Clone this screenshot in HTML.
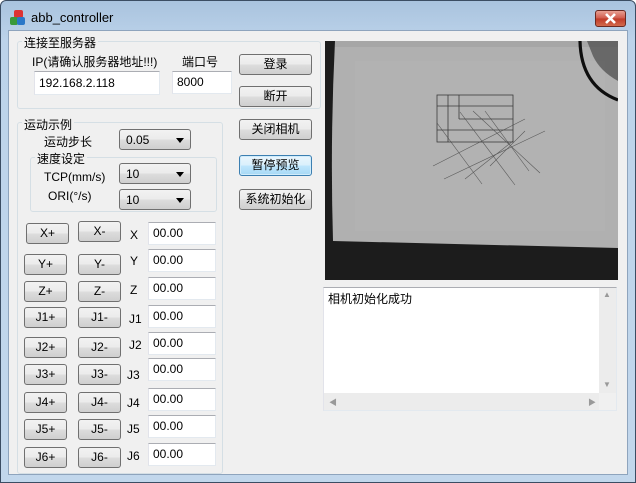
<!DOCTYPE html>
<html><head><meta charset="utf-8"><style>
*{box-sizing:border-box;margin:0;padding:0}
body{width:636px;height:483px;overflow:hidden;background:#fff;font-family:"Liberation Sans","Noto Sans CJK SC",sans-serif;font-size:12px;color:#000;position:relative}
.frame{position:absolute;left:0;top:0;width:636px;height:483px;background:linear-gradient(#a9c3de,#bcd3ea 40px,#c2d7ec);border:1px solid #3b4d63;border-radius:6px 6px 0 0}
.client{position:absolute;left:8px;top:30px;width:620px;height:445px;background:#f0f0f0;border:1px solid #8ea4bd}
.a{position:absolute}
.t{position:absolute;white-space:nowrap;font-size:12px}
.gb{position:absolute;border:1px solid #d5dfe5;border-radius:3px}
.gl{position:absolute;background:#f0f0f0;padding:0 2px;white-space:nowrap}
.btn{position:absolute;border:1px solid #707070;border-radius:3px;background:linear-gradient(#f2f2f2 0,#ebebeb 50%,#dddddd 51%,#cfcfcf 100%);text-align:center;font-size:12px;line-height:19px}
.btn.hi{border-color:#3c7fb1;background:linear-gradient(#eaf6fd,#d9f0fc 50%,#bee6fd 51%,#a7d9f5);box-shadow:inset 0 0 0 1px #d0ecfb}
.tb{position:absolute;background:#fff;border:1px solid #abadb3;border-color:#abadb3 #e3e9ef #e3e9ef #e2e3ea;padding:3px 0 0 4px;font-size:12px}
.cb{position:absolute;border:1px solid #707070;border-radius:3px;background:linear-gradient(#f2f2f2,#ebebeb 50%,#dddddd 51%,#cfcfcf);padding:3px 0 0 6px;font-size:12px}
.cb:after{content:"";position:absolute;right:6px;top:8px;border-left:4px solid transparent;border-right:4px solid transparent;border-top:5px solid #000}
</style></head><body>
<div class="frame"></div>
<div class="a" style="left:10px;top:10px;width:16px;height:16px">
<div class="a" style="left:4px;top:0;width:9px;height:8px;background:#d33;border-radius:2px"></div>
<div class="a" style="left:0;top:7px;width:8px;height:8px;background:#3a9a3a;border-radius:2px"></div>
<div class="a" style="left:7px;top:7px;width:8px;height:8px;background:#2a78c8;border-radius:2px"></div>
</div>
<div class="t" style="left:31px;top:10px;font-size:13px">abb_controller</div>
<div class="a" style="left:595px;top:10px;width:31px;height:17px;border:1px solid #6b2a22;border-radius:3px;background:linear-gradient(#e8a093,#d0594a 50%,#c03a28 51%,#d26a4c)">
<svg width="29" height="15" style="position:absolute;left:0;top:0"><path d="M10 3 L19 12 M19 3 L10 12" stroke="#fff" stroke-width="2.6"/></svg>
</div>
<div class="client"></div>

<div class="gb" style="left:17px;top:41px;width:304px;height:68px"></div>
<div class="gl" style="left:22px;top:34px">连接至服务器</div>
<div class="t" style="left:32px;top:53px">IP(请确认服务器地址!!!)</div>
<div class="t" style="left:182px;top:53px">端口号</div>
<div class="tb" style="left:34px;top:71px;width:126px;height:24px;padding-top:4px">192.168.2.118</div>
<div class="tb" style="left:172px;top:71px;width:60px;height:23px;padding-top:3px">8000</div>

<div class="btn" style="left:239px;top:54px;width:73px;height:21px">登录</div>
<div class="btn" style="left:239px;top:86px;width:73px;height:21px">断开</div>
<div class="btn" style="left:239px;top:119px;width:73px;height:21px">关闭相机</div>
<div class="btn hi" style="left:239px;top:155px;width:73px;height:21px">暂停预览</div>
<div class="btn" style="left:239px;top:189px;width:73px;height:21px">系统初始化</div>

<div class="gb" style="left:17px;top:122px;width:206px;height:352px"></div>
<div class="gl" style="left:22px;top:116px">运动示例</div>
<div class="t" style="left:44px;top:133px">运动步长</div>
<div class="cb" style="left:119px;top:129px;width:72px;height:21px">0.05</div>
<div class="gb" style="left:30px;top:157px;width:187px;height:55px"></div>
<div class="gl" style="left:35px;top:150px">速度设定</div>
<div class="t" style="left:44px;top:170px">TCP(mm/s)</div>
<div class="cb" style="left:119px;top:163px;width:72px;height:21px">10</div>
<div class="t" style="left:48px;top:189px">ORI(°/s)</div>
<div class="cb" style="left:119px;top:189px;width:72px;height:21px">10</div>

<div class="btn" style="left:26px;top:223px;width:43px;height:21px">X+</div>
<div class="btn" style="left:78px;top:221px;width:43px;height:21px">X-</div>
<div class="t" style="left:130px;top:228px">X</div>
<div class="tb" style="left:148px;top:222px;width:68px;height:23px">00.00</div>

<div class="btn" style="left:24px;top:254px;width:43px;height:21px">Y+</div>
<div class="btn" style="left:78px;top:254px;width:43px;height:21px">Y-</div>
<div class="t" style="left:130px;top:254px">Y</div>
<div class="tb" style="left:148px;top:249px;width:68px;height:23px">00.00</div>

<div class="btn" style="left:24px;top:281px;width:43px;height:21px">Z+</div>
<div class="btn" style="left:78px;top:281px;width:43px;height:21px">Z-</div>
<div class="t" style="left:130px;top:283px">Z</div>
<div class="tb" style="left:148px;top:277px;width:68px;height:23px">00.00</div>

<div class="btn" style="left:24px;top:307px;width:43px;height:21px">J1+</div>
<div class="btn" style="left:78px;top:307px;width:43px;height:21px">J1-</div>
<div class="t" style="left:129px;top:312px">J1</div>
<div class="tb" style="left:148px;top:305px;width:68px;height:23px">00.00</div>

<div class="btn" style="left:24px;top:337px;width:43px;height:21px">J2+</div>
<div class="btn" style="left:78px;top:337px;width:43px;height:21px">J2-</div>
<div class="t" style="left:129px;top:338px">J2</div>
<div class="tb" style="left:148px;top:332px;width:68px;height:23px">00.00</div>

<div class="btn" style="left:24px;top:364px;width:43px;height:21px">J3+</div>
<div class="btn" style="left:78px;top:364px;width:43px;height:21px">J3-</div>
<div class="t" style="left:127px;top:368px">J3</div>
<div class="tb" style="left:148px;top:358px;width:68px;height:23px">00.00</div>

<div class="btn" style="left:24px;top:392px;width:43px;height:21px">J4+</div>
<div class="btn" style="left:78px;top:392px;width:43px;height:21px">J4-</div>
<div class="t" style="left:127px;top:396px">J4</div>
<div class="tb" style="left:148px;top:388px;width:68px;height:23px">00.00</div>

<div class="btn" style="left:24px;top:419px;width:43px;height:21px">J5+</div>
<div class="btn" style="left:78px;top:419px;width:43px;height:21px">J5-</div>
<div class="t" style="left:127px;top:422px">J5</div>
<div class="tb" style="left:148px;top:415px;width:68px;height:23px">00.00</div>

<div class="btn" style="left:24px;top:447px;width:43px;height:21px">J6+</div>
<div class="btn" style="left:78px;top:447px;width:43px;height:21px">J6-</div>
<div class="t" style="left:127px;top:449px">J6</div>
<div class="tb" style="left:148px;top:443px;width:68px;height:23px">00.00</div>

<svg class="a" style="left:325px;top:41px" width="293" height="239">
<rect width="293" height="239" fill="#1c1c1c"/>
<path d="M10 0 L293 0 L293 207 L8 200 Q5 100 10 0 Z" fill="#b0b0b0"/>
<path d="M30 20 L280 20 L280 190 L30 190 Z" fill="#b4b4b4" opacity=".6"/>
<path d="M10 0 L293 0 L293 6 L10 6 Z" fill="#989898" opacity=".4"/>
<path d="M262 0 L293 0 L293 40 Q275 30 268 15 Z" fill="#4a4a4a" opacity=".7"/>
<path d="M255 0 Q256 45 293 59" stroke="#0e0e0e" stroke-width="3.2" fill="none"/>
<g stroke="#3a3a3a" stroke-width="0.8" fill="none">
<rect x="112" y="54" width="76" height="47"/>
<line x1="123" y1="54" x2="123" y2="101"/>
<line x1="134" y1="54" x2="134" y2="78"/>
<line x1="112" y1="65" x2="188" y2="65"/>
<line x1="112" y1="89" x2="188" y2="89"/>
<line x1="134" y1="78" x2="188" y2="78"/>
</g>
<g stroke="#4a4a4a" stroke-width="0.6" opacity=".85">
<line x1="108" y1="125" x2="200" y2="78"/><line x1="119" y1="138" x2="220" y2="90"/>
<line x1="140" y1="138" x2="188" y2="100"/><line x1="135" y1="71" x2="190" y2="144"/>
<line x1="148" y1="70" x2="215" y2="132"/><line x1="160" y1="70" x2="204" y2="130"/>
<line x1="112" y1="82" x2="157" y2="143"/><line x1="165" y1="125" x2="200" y2="90"/>
</g>
</svg>

<div class="a" style="left:323px;top:287px;width:294px;height:124px;background:#fff;border:1px solid #abadb3;border-color:#abadb3 #e3e9ef #e3e9ef #e2e3ea"></div>
<div class="t" style="left:328px;top:290px;font-size:12px">相机初始化成功</div>
<div class="a" style="left:599px;top:288px;width:17px;height:105px;background:#ececec"></div>
<div class="a" style="left:324px;top:393px;width:275px;height:17px;background:#ececec"></div>
<div class="a" style="left:599px;top:393px;width:17px;height:17px;background:#f0f0f0"></div>
<div class="t" style="left:603px;top:290px;font-size:8px;color:#999">▲</div>
<div class="t" style="left:603px;top:380px;font-size:8px;color:#999">▼</div>
<div class="t" style="left:329px;top:397px;font-size:8px;color:#999">◀</div>
<div class="t" style="left:588px;top:397px;font-size:8px;color:#999">▶</div>
</body></html>
